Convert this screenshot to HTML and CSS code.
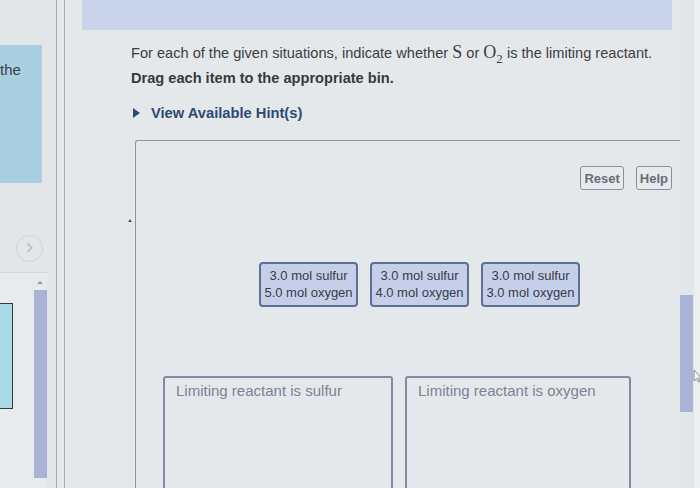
FILE: index.html
```html
<!DOCTYPE html>
<html>
<head>
<meta charset="utf-8">
<link rel="stylesheet" href="styles.css">
</head>
<body>
<div class="screen">
  <aside class="side">
    <div class="side-card"><span class="side-text">the</span></div>
    <div class="side-next">&#8250;</div>
    <div class="side-lower">
      <div class="side-cyan"></div>
      <div class="side-scroll">
        <div class="side-arrow"></div>
        <div class="side-thumb"></div>
      </div>
    </div>
  </aside>
  <div class="gutter"></div>
  <main class="main">
    <div class="topbar"></div>
    <p class="prompt">For each of the given situations, indicate whether <span class="chem">S</span> or <span class="chem">O<sub>2</sub></span> is the limiting reactant.</p>
    <p class="instr">Drag each item to the appropriate bin.</p>
    <div class="hint"><span class="tri"></span>View Available Hint(s)</div>
    <section class="area">
      <div class="marker"></div>
      <div class="tools">
        <button class="btn">Reset</button>
        <button class="btn">Help</button>
      </div>
      <div class="items">
        <div class="item">3.0 mol sulfur<br>5.0 mol oxygen</div>
        <div class="item">3.0 mol sulfur<br>4.0 mol oxygen</div>
        <div class="item">3.0 mol sulfur<br>3.0 mol oxygen</div>
      </div>
      <div class="bins">
        <div class="bin bin-a">Limiting reactant is sulfur</div>
        <div class="bin bin-b">Limiting reactant is oxygen</div>
      </div>
    </section>
  </main>
  <div class="rscroll">
    <div class="rthumb"></div>
    <div class="cursor">
      <svg width="9" height="14" viewBox="0 0 9 14"><path d="M1 1 L1 12 L3.6 9.6 L5.4 13 L6.8 12.3 L5.1 9 L8.4 9 Z" fill="#f3f4f6" stroke="#7d8597" stroke-width="0.9"/></svg>
    </div>
  </div>
</div>
</body>
</html>
```

FILE: styles.css
```css
* { box-sizing: border-box; }
html, body { margin: 0; padding: 0; }
body {
  width: 700px;
  height: 488px;
  overflow: hidden;
  background: #e4e7ea;
  font-family: "Liberation Sans", Arial, sans-serif;
}
.screen {
  display: flex;
  width: 700px;
  height: 488px;
  overflow: hidden;
  background: #e5e8eb;
}
.side {
  width: 57px;
  flex: none;
  border-right: 1px solid #a3a8ae;
  background: #e3e6e8;
  display: flex;
  flex-direction: column;
}
.side-card {
  margin-top: 45px;
  width: 42px;
  height: 138px;
  background: #a9cfe1;
  padding-top: 16px;
}
.side-text {
  display: block;
  margin-left: 0;
  font-size: 15px;
  color: #3a4148;
}
.side-next {
  margin: 52px 0 0 16px;
  width: 27px;
  height: 27px;
  border: 1px solid #cfd3d6;
  border-radius: 50%;
  color: #b9bec4;
  font-size: 22px;
  line-height: 22px;
  text-align: center;
}
.side-lower {
  margin-top: 10px;
  flex: 1;
  width: 47px;
  border-top: 1px solid #d2d6da;
  background: #e8eaec;
  display: flex;
  justify-content: space-between;
}
.side-cyan {
  margin-top: 30px;
  width: 13px;
  height: 106px;
  background: #a9d8e6;
  border: 1px solid #333a40;
  border-left: none;
}
.side-scroll {
  width: 14px;
  display: flex;
  flex-direction: column;
  align-items: center;
}
.side-arrow {
  margin-top: 8px;
  width: 0;
  height: 0;
  border-left: 3px solid transparent;
  border-right: 3px solid transparent;
  border-bottom: 3px solid #8f98a8;
}
.side-thumb {
  margin-top: 6px;
  width: 13px;
  height: 188px;
  background: #a9b3d5;
}
.gutter {
  width: 8px;
  flex: none;
  border-right: 1px solid #9fb0c6;
}
.main {
  flex: 1;
  min-width: 0;
  display: flex;
  flex-direction: column;
}
.topbar {
  margin-left: 17px;
  width: 590px;
  height: 30px;
  background: #c8d2e9;
  flex: none;
}
.prompt {
  margin: 12px 0 0 66px;
  font-size: 14.6px;
  line-height: 20px;
  color: #3b3e42;
  white-space: nowrap;
}
.chem {
  font-family: "Liberation Serif", "Times New Roman", serif;
  font-size: 18px;
}
.chem sub {
  font-size: 13px;
  line-height: 0;
}
.instr {
  margin: 5px 0 0 66px;
  font-size: 14.6px;
  line-height: 20px;
  font-weight: bold;
  color: #36393d;
}
.hint {
  margin: 15px 0 0 68px;
  font-size: 14.7px;
  line-height: 20px;
  font-weight: bold;
  color: #2b4a78;
  display: flex;
  align-items: center;
}
.tri {
  width: 0;
  height: 0;
  border-top: 5px solid transparent;
  border-bottom: 5px solid transparent;
  border-left: 7px solid #2b4a78;
  margin-right: 11px;
}
.area {
  margin: 17px 0 0 70px;
  flex: 1;
  border-top: 1px solid #8d95a1;
  border-left: 1px solid #8d95a1;
  border-top-left-radius: 3px;
  position: relative;
  display: flex;
  flex-direction: column;
}
.marker {
  position: absolute;
  left: -8px;
  top: 78px;
  width: 0;
  height: 0;
  border-left: 2px solid transparent;
  border-right: 2px solid transparent;
  border-bottom: 3px solid #555;
}
.tools {
  margin-top: 25px;
  display: flex;
  justify-content: flex-end;
  gap: 12px;
  padding-right: 8px;
}
.btn {
  height: 24px;
  padding: 0 3px;
  border: 1.5px solid #8a9099;
  border-radius: 3px;
  background: #e7e9ed;
  font-family: "Liberation Sans", Arial, sans-serif;
  font-size: 13px;
  font-weight: bold;
  color: #686d75;
}
.items {
  margin: 72px 0 0 123px;
  display: flex;
  gap: 12px;
}
.item {
  width: 99px;
  height: 45px;
  background: #c5cfea;
  border: 2px solid #5e6f93;
  border-radius: 4px;
  font-size: 13px;
  line-height: 17px;
  color: #383c44;
  text-align: center;
  padding-top: 3px;
}
.bins {
  margin: 69px 0 0 27px;
  display: flex;
  gap: 12px;
  flex: 1;
}
.bin {
  height: 130px;
  border: 2px solid #7f8ba0;
  border-radius: 3px;
  font-size: 15px;
  color: #7a8394;
  padding: 4px 0 0 11px;
}
.bin-a { width: 230px; }
.bin-b { width: 226px; }
.rscroll {
  width: 20px;
  flex: none;
  background: linear-gradient(to right, #e2e5e9 0, #e2e5e9 70%, #eceef0 70%);
  position: relative;
}
.rthumb {
  margin: 295px 0 0 0;
  width: 13px;
  height: 117px;
  background: #a9b3d5;
}
.cursor {
  position: absolute;
  left: 13px;
  top: 369px;
}
```
